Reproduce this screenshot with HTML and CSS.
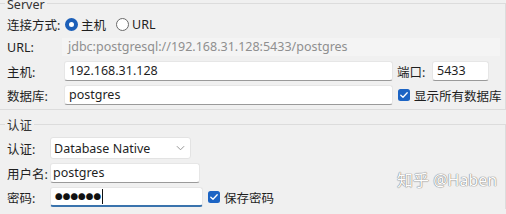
FILE: index.html
```html
<!DOCTYPE html>
<html lang="zh-CN">
<head>
<meta charset="utf-8">
<title>连接设置</title>
<link rel="stylesheet" href="styles.css">
</head>
<body>
<fieldset class="group server">
  <legend class="legend legend-server">Server</legend>
  <div class="row r1">
    <span class="label">连接方式:</span>
    <span class="radio on"></span><span class="opt">主机</span>
    <span class="radio"></span><span class="opt">URL</span>
  </div>
  <div class="row r2">
    <span class="label">URL:</span>
    <div class="urlfield">jdbc:postgresql://192.168.31.128:5433/postgres</div>
  </div>
  <div class="row r3">
    <span class="label">主机:</span>
    <div class="input wide">192.168.31.128</div>
    <span class="plabel">端口:</span>
    <div class="input port">5433</div>
  </div>
  <div class="row r4">
    <span class="label">数据库:</span>
    <div class="input wide">postgres</div>
    <span class="check"><svg viewBox="0 0 12 12" width="12" height="12"><rect x="0" y="0" width="12" height="12" rx="2.5" fill="#1c64c4"/><path d="M2.8 6.2 L5 8.3 L9.2 3.8" fill="none" stroke="#fff" stroke-width="1.3" stroke-linecap="round" stroke-linejoin="round"/></svg></span>
    <span class="ctext">显示所有数据库</span>
  </div>
</fieldset>
<fieldset class="group auth">
  <legend class="legend legend-auth">认证</legend>
  <div class="row a1">
    <span class="label alabel">认证:</span>
    <div class="combo"><span>Database Native</span><svg class="chev" viewBox="0 0 10 6" width="9" height="6"><path d="M1 1 L5 5 L9 1" fill="none" stroke="#8a8a8a" stroke-width="1"/></svg></div>
  </div>
  <div class="row a2">
    <span class="label alabel">用户名:</span>
    <div class="input user">postgres</div>
  </div>
  <div class="row a3">
    <span class="label alabel">密码:</span>
    <div class="input user pass"><span class="dots">●●●●●●</span><span class="caret"></span></div>
    <span class="check check2"><svg viewBox="0 0 12 12" width="12" height="12"><rect x="0" y="0" width="12" height="12" rx="2.5" fill="#1c64c4"/><path d="M2.8 6.2 L5 8.3 L9.2 3.8" fill="none" stroke="#fff" stroke-width="1.3" stroke-linecap="round" stroke-linejoin="round"/></svg></span>
    <span class="ctext">保存密码</span>
  </div>
</fieldset>
<div class="watermark">知乎 @Haben</div>
</body>
</html>
```
FILE: styles.css
```css
html, body {
  margin: 0;
  padding: 0;
}
body {
  width: 506px;
  height: 214px;
  overflow: hidden;
  background: #f0f0f0;
  font-family: "Noto Sans", "Noto Sans CJK SC", sans-serif;
  font-size: 12.5px;
  color: #1f1f1f;
  position: relative;
}
.group {
  margin: 0;
  padding: 0;
  min-inline-size: 0;
  border: 1px solid #dcdcdc;
  border-left: none;
}
.server {
  margin-top: -7px;
  padding-bottom: 2px;
}
.auth {
  margin-top: 3px;
  border-bottom: none;
}
.legend {
  padding: 0 2px;
  margin-left: 5px;
  line-height: 16px;
  color: #333;
}
.legend-server {
  padding-top: 4px;
}
.legend-auth {
  padding-top: 4px;
  line-height: 18px;
}
.row {
  display: flex;
  align-items: center;
  padding-left: 7px;
}
.r1 { margin-top: 0; height: 22px; }
.r2 { margin-top: 1px; height: 22px; }
.r3 { margin-top: 1px; height: 24px; }
.r4 { height: 24px; }
.a1 { margin-top: 2px; height: 22px; }
.a2 { margin-top: 2px; height: 24px; }
.a3 { height: 24px; }
.label {
  width: 57px;
  flex: none;
  white-space: nowrap;
}
.alabel {
  width: 43px;
}
.radio {
  width: 11px;
  height: 11px;
  border-radius: 50%;
  border: 1px solid #6a6a6a;
  background: #fff;
  margin-left: 1px;
  flex: none;
}
.radio.on {
  width: 5px;
  height: 5px;
  border: 4px solid #1c5fb8;
  margin-left: 1px;
}
.opt {
  margin-left: 3px;
  margin-right: 9px;
}
.urlfield {
  margin-left: -2px;
  width: 432px;
  height: 18px;
  line-height: 18px;
  padding-left: 6px;
  background: #f4f4f4;
  color: #8f8f8f;
  white-space: nowrap;
}
.input {
  height: 18px;
  line-height: 18px;
  background: #fff;
  border: 1px solid #e6e6e6;
  border-bottom: 1px solid #9a9a9a;
  border-radius: 3px;
  padding-left: 4px;
  box-sizing: content-box;
  white-space: nowrap;
}
.wide {
  width: 323px;
}
.plabel {
  margin-left: 4px;
  width: 35px;
}
.port {
  width: 51px;
}
.check {
  display: flex;
  margin-left: 5px;
}
.check2 {
  margin-left: 5px;
}
.ctext {
  margin-left: 4px;
  white-space: nowrap;
}
.combo {
  margin-left: 0;
  width: 131px;
  height: 20px;
  padding-left: 3px;
  background: #fff;
  border: 1px solid #e3e3e3;
  border-radius: 3px;
  display: flex;
  align-items: center;
  justify-content: space-between;
  padding-right: 5px;
}
.chev {
  display: block;
}
.user {
  width: 146px;
  padding-left: 2px;
}
.pass {
  border-bottom: 2px solid #3a73ad;
  height: 17px;
  display: flex;
  align-items: center;
  padding-left: 4px;
  width: 147px;
}
.dots {
  font-size: 7.5px;
  letter-spacing: 0.2px;
  color: #111;
}
.caret {
  width: 1px;
  height: 15px;
  background: #111;
  margin-left: 1px;
}
.watermark {
  position: absolute;
  left: 397px;
  top: 170px;
  font-size: 16px;
  line-height: 20px;
  color: #fdfdfd;
  text-shadow: 0 0 1px #808080, 0 0 1px #909090, 0 0 1px #a0a0a0;
  white-space: nowrap;
}
```
